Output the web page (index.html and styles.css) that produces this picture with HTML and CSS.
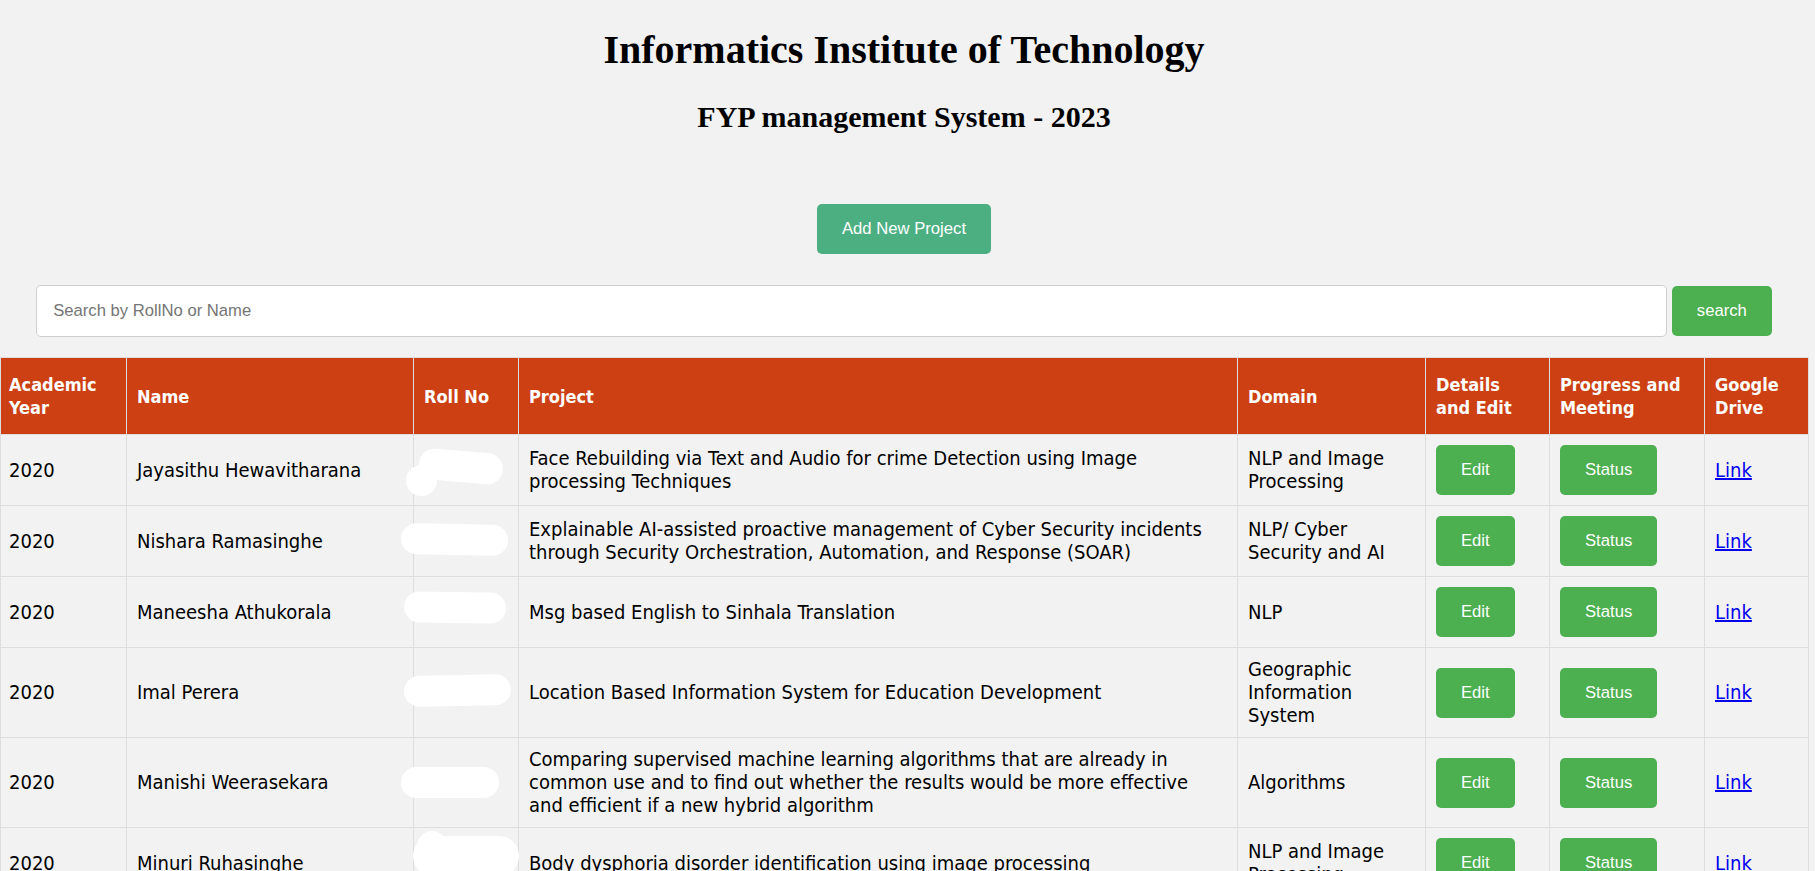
FILE: index.html
```html
<!DOCTYPE html>
<html lang="en">
<head>
<meta charset="utf-8">
<title>FYP management System - 2023</title>
<link rel="stylesheet" href="styles.css">
</head>
<body>
<div class="page">
  <header class="heading">
    <h1>Informatics Institute of Technology</h1>
    <h2>FYP management System - 2023</h2>
  </header>

  <div class="add-row">
    <button class="btn btn-add" type="button">Add New Project</button>
  </div>

  <form class="search-row">
    <input class="search-input" type="text" placeholder="Search by RollNo or Name">
    <button class="btn btn-search" type="button">search</button>
  </form>

  <table class="projects">
    <colgroup>
      <col class="c-year"><col class="c-name"><col class="c-roll"><col class="c-project">
      <col class="c-domain"><col class="c-edit"><col class="c-status"><col class="c-drive">
    </colgroup>
    <thead>
      <tr>
        <th>Academic Year</th>
        <th>Name</th>
        <th>Roll No</th>
        <th>Project</th>
        <th>Domain</th>
        <th>Details and Edit</th>
        <th>Progress and Meeting</th>
        <th>Google Drive</th>
      </tr>
    </thead>
    <tbody>
      <tr>
        <td>2020</td>
        <td>Jayasithu Hewavitharana</td>
        <td class="roll"><span class="blob b1a"></span><span class="blob b1b"></span></td>
        <td>Face Rebuilding via Text and Audio for crime Detection using Image processing Techniques</td>
        <td>NLP and Image Processing</td>
        <td><button class="btn btn-row" type="button">Edit</button></td>
        <td><button class="btn btn-row" type="button">Status</button></td>
        <td><a href="#">Link</a></td>
      </tr>
      <tr>
        <td>2020</td>
        <td>Nishara Ramasinghe</td>
        <td class="roll"><span class="blob b2"></span></td>
        <td>Explainable AI-assisted proactive management of Cyber Security incidents through Security Orchestration, Automation, and Response (SOAR)</td>
        <td>NLP/ Cyber Security and AI</td>
        <td><button class="btn btn-row" type="button">Edit</button></td>
        <td><button class="btn btn-row" type="button">Status</button></td>
        <td><a href="#">Link</a></td>
      </tr>
      <tr>
        <td>2020</td>
        <td>Maneesha Athukorala</td>
        <td class="roll"><span class="blob b3"></span></td>
        <td>Msg based English to Sinhala Translation</td>
        <td>NLP</td>
        <td><button class="btn btn-row" type="button">Edit</button></td>
        <td><button class="btn btn-row" type="button">Status</button></td>
        <td><a href="#">Link</a></td>
      </tr>
      <tr>
        <td>2020</td>
        <td>Imal Perera</td>
        <td class="roll"><span class="blob b4"></span></td>
        <td>Location Based Information System for Education Development</td>
        <td>Geographic Information System</td>
        <td><button class="btn btn-row" type="button">Edit</button></td>
        <td><button class="btn btn-row" type="button">Status</button></td>
        <td><a href="#">Link</a></td>
      </tr>
      <tr>
        <td>2020</td>
        <td>Manishi Weerasekara</td>
        <td class="roll"><span class="blob b5"></span></td>
        <td>Comparing supervised machine learning algorithms that are already in common use and to find out whether the results would be more effective and efficient if a new hybrid algorithm</td>
        <td>Algorithms</td>
        <td><button class="btn btn-row" type="button">Edit</button></td>
        <td><button class="btn btn-row" type="button">Status</button></td>
        <td><a href="#">Link</a></td>
      </tr>
      <tr>
        <td>2020</td>
        <td>Minuri Ruhasinghe</td>
        <td class="roll"><span class="blob b6a"></span><span class="blob b6b"></span></td>
        <td>Body dysphoria disorder identification using image processing</td>
        <td>NLP and Image Processing</td>
        <td><button class="btn btn-row" type="button">Edit</button></td>
        <td><button class="btn btn-row" type="button">Status</button></td>
        <td><a href="#">Link</a></td>
      </tr>
    </tbody>
  </table>
</div>
</body>
</html>
```

FILE: styles.css
```css
html, body {
  margin: 0;
  padding: 0;
  background: #f2f2f2;
}

.page {
  width: 1808px;
}

.heading {
  text-align: center;
  font-family: "Liberation Serif", "Times New Roman", serif;
  color: #000;
}

.heading h1 {
  margin: 27px 0 0;
  font-size: 40px;
  line-height: 46px;
  font-weight: bold;
}

.heading h2 {
  margin: 27px 0 0;
  font-size: 30px;
  line-height: 34px;
  font-weight: bold;
}

.btn {
  font-family: "Liberation Sans", Arial, sans-serif;
  font-size: 16.67px;
  line-height: 20px;
  color: #fff;
  border: none;
  border-radius: 5px;
  padding: 15px 25px;
  cursor: pointer;
}

.add-row {
  display: flex;
  justify-content: center;
  margin-top: 70px;
}

.btn-add {
  background: #4caf82;
}

.search-row {
  width: 96%;
  margin: 31px auto 0;
  display: flex;
  align-items: center;
  gap: 5px;
}

.search-input {
  flex: 1;
  box-sizing: border-box;
  height: 52px;
  margin: 0;
  padding: 0 16px;
  border: 1px solid #cfcfcf;
  border-radius: 5px;
  background: #fff;
  font-family: "Liberation Sans", Arial, sans-serif;
  font-size: 16.67px;
  color: #333;
}

.search-input::placeholder {
  color: #757575;
}

.btn-search {
  background: #4caf50;
  width: 100px;
  padding: 15px 0;
}

.projects {
  margin-top: 20px;
  width: 1808px;
  table-layout: fixed;
  border-collapse: collapse;
  border: 1px solid #ddd;
  font-family: "DejaVu Sans Condensed", "DejaVu Sans", sans-serif;
  font-stretch: condensed;
  font-size: 20px;
  line-height: 23px;
  color: #000;
}

.c-year { width: 126px; }
.c-name { width: 287px; }
.c-roll { width: 105px; }
.c-project { width: 719px; }
.c-domain { width: 188px; }
.c-edit { width: 124px; }
.c-status { width: 155px; }
.c-drive { width: 104px; }

.projects th {
  background: #cc4013;
  color: #fff;
  font-size: 18px;
  font-weight: bold;
  text-align: left;
  padding: 15px 10px;
  border: 1px solid #ddd;
}

.projects td {
  padding: 10px;
  border: 1px solid #ddd;
  vertical-align: middle;
  background: #f2f2f2;
}

.projects th:first-child,
.projects td:first-child {
  padding-left: 8px;
}

.projects td.roll {
  position: relative;
  overflow: visible;
}

.btn-row {
  background: #4caf50;
}

.projects a {
  color: #0000ee;
  text-decoration: underline;
}

.blob {
  position: absolute;
  background: #fff;
  border-radius: 16px;
  height: 31px;
}

.b1a { left: 5px; top: 16px; width: 84px; transform: rotate(5deg); }
.b1b { left: -8px; top: 30px; width: 31px; height: 31px; border-radius: 50%; }
.b2 { left: -13px; top: 18px; width: 107px; transform: rotate(1deg); }
.b3 { left: -10px; top: 15px; width: 102px; transform: rotate(1deg); }
.b4 { left: -10px; top: 27px; width: 107px; transform: rotate(-1deg); }
.b5 { left: -13px; top: 29px; width: 98px; }
.b6a { left: -1px; top: 8px; width: 106px; height: 40px; border-radius: 20px; }
.b6b { left: 3px; top: 3px; width: 30px; height: 30px; border-radius: 50%; }
```
